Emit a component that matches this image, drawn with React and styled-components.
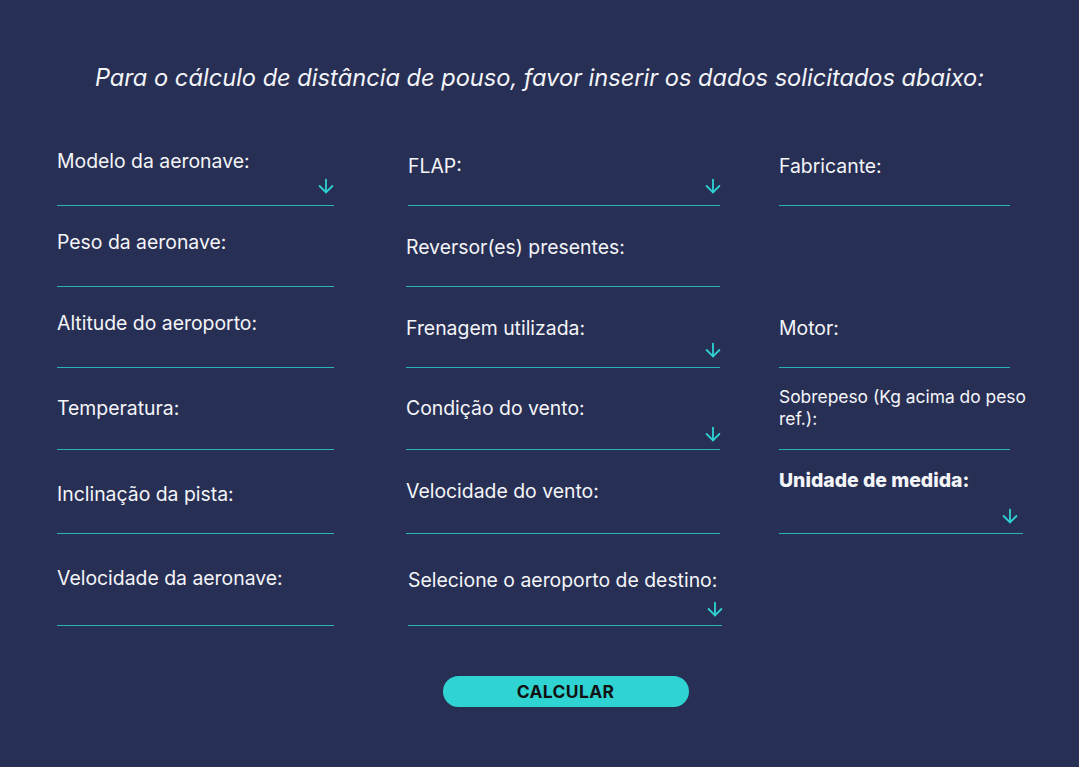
import styled, { createGlobalStyle } from 'styled-components'
import { ArrowDown } from 'lucide-react'

const GlobalStyle = createGlobalStyle`
  body {
    margin: 0;
    background: #282f54;
    font-family: Inter, 'Noto Sans', sans-serif;
  }
`

const Page = styled.div`
  width: 1079px;
  height: 767px;
  background: #282f54;
  color: #f4f5f8;
  display: flex;
  flex-direction: column;
  align-items: center;
`

const Title = styled.h1`
  margin: 64px 0 0;
  font-size: 23.6px;
  font-weight: 400;
  font-style: italic;
  line-height: 28px;
  color: #f4f5f8;
  white-space: nowrap;
`

const Grid = styled.div`
  align-self: stretch;
  margin-top: 32px;
  padding-left: 57px;
  display: grid;
  grid-template-columns: 350px 372px 270px;
  grid-template-rows: 82px 81px 81px 82px 84px 92px;
`

const Cell = styled.div`
  display: flex;
  flex-direction: column;
  min-height: 0;
  margin-left: ${p => p.$shift || 0}px;
`

const Label = styled.label`
  padding-top: ${p => p.$top}px;
  max-width: 262px;
  font-size: ${p => (p.$small ? 17.4 : 19.4)}px;
  line-height: 22px;
  font-weight: ${p => (p.$bold ? 800 : 400)};
  color: #f4f5f8;
  white-space: ${p => (p.$small ? 'normal' : 'nowrap')};
`

const Input = styled.div`
  flex: 1;
  min-height: 0;
  width: ${p => p.$w}px;
  border-bottom: 1px solid rgba(45, 200, 200, 0.85);
  display: flex;
  align-items: flex-end;
  justify-content: flex-end;
  padding-bottom: ${p => p.$pb ?? 7}px;
  box-sizing: border-box;
  color: #2fd2d2;
`

const Empty = styled.div``

const Footer = styled.div`
  margin-top: 50px;
  margin-left: 52px;
`

const Button = styled.button`
  width: 246px;
  height: 31px;
  border: none;
  border-radius: 16px;
  background: #2fd3d2;
  color: #111;
  font-family: Inter, sans-serif;
  font-size: 17.4px;
  font-weight: 700;
  letter-spacing: 0.4px;
  cursor: pointer;
`

const fields = [
  { label: 'Modelo da aeronave:', top: 26, w: 277, arrow: true, ar: -3, pb: 8 },
  { label: 'FLAP:', top: 31, w: 312, arrow: true, shift: 1, ar: -4, pb: 8 },
  { label: 'Fabricante:', top: 31, w: 231 },
  { label: 'Peso da aeronave:', top: 25, w: 277 },
  { label: 'Reversor(es) presentes:', top: 30, w: 314, shift: -1 },
  null,
  { label: 'Altitude do aeroporto:', top: 25, w: 277 },
  { label: 'Frenagem utilizada:', top: 30, w: 314, arrow: true, shift: -1, ar: -4, pb: 6 },
  { label: 'Motor:', top: 30, w: 231 },
  { label: 'Temperatura:', top: 29, w: 277 },
  { label: 'Condição do vento:', top: 29, w: 314, arrow: true, shift: -1, ar: -4, pb: 4 },
  { label: 'Sobrepeso (Kg acima do peso ref.):', top: 18, w: 231, small: true },
  { label: 'Inclinação da pista:', top: 33, w: 277 },
  { label: 'Velocidade do vento:', top: 30, w: 314, shift: -1 },
  { label: 'Unidade de medida:', top: 19, w: 244, arrow: true, bold: true, ar: 2, pb: 6 },
  { label: 'Velocidade da aeronave:', top: 33, w: 277 },
  { label: 'Selecione o aeroporto de destino:', top: 35, w: 314, arrow: true, shift: 1, ar: -4, pb: 5 },
  null,
]

const App = () => {
  return (
    <Page>
      <GlobalStyle />
      <Title>Para o cálculo de distância de pouso, favor inserir os dados solicitados abaixo:</Title>
      <Grid>
        {fields.map((f, i) =>
          f ? (
            <Cell key={i} $shift={f.shift}>
              <Label $top={f.top} $small={f.small} $bold={f.bold}>{f.label}</Label>
              <Input $w={f.w} $pb={f.pb}>
                {f.arrow && <ArrowDown size={22} strokeWidth={2} style={{ marginRight: f.ar, flexShrink: 0 }} />}
              </Input>
            </Cell>
          ) : (
            <Empty key={i} />
          )
        )}
      </Grid>
      <Footer>
        <Button>CALCULAR</Button>
      </Footer>
    </Page>
  )
}

export default App
